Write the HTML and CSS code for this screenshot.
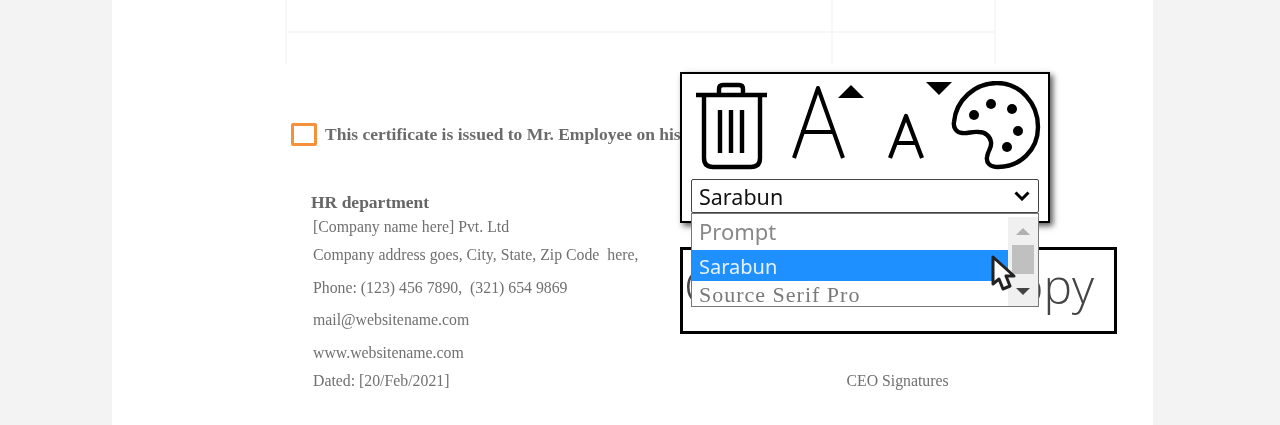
FILE: index.html
```html
<!DOCTYPE html>
<html lang="en">
<head>
<meta charset="utf-8">
<title>Certificate editor</title>
<link rel="stylesheet" href="styles.css">
</head>
<body>
<main class="page">
  <div class="grid-table">
    <div class="cell"></div><div class="cell"></div>
    <div class="cell"></div><div class="cell"></div>
  </div>
  <div class="notice">
    <span class="check"></span>
    <p class="notice-text">This certificate is issued to Mr. Employee on his</p>
  </div>
  <section class="details">
    <h2 class="dept">HR department</h2>
    <p class="line l-company">[Company name here] Pvt. Ltd</p>
    <p class="line l-address">Company address goes, City, State, Zip Code&nbsp; here,</p>
    <p class="line l-phone">Phone: (123) 456 7890,&nbsp; (321) 654 9869</p>
    <p class="line l-mail">mail@websitename.com</p>
    <p class="line l-web">www.websitename.com</p>
    <div class="foot">
      <p class="line">Dated: [20/Feb/2021]</p>
      <p class="line sign">CEO Signatures</p>
    </div>
  </section>

  <div class="copybox"><span>Certified</span><span>Copy</span></div>

  <div class="toolbox">
    <div class="tools">
      <svg class="icon i-trash" viewBox="694 82 76 88" width="76" height="88" fill="none" stroke="#000" stroke-width="4.4" stroke-linejoin="round">
        <path d="M696 95H767"/>
        <path d="M719 95V89Q719 85 723 85H739Q743 85 743 89V95"/>
        <path d="M704 95V158Q704 167 713 167H751Q760 167 760 158V95"/>
        <path d="M720 110V153M731 110V153M742 110V153"/>
      </svg>
      <svg class="icon i-big" viewBox="790 82 76 88" width="76" height="88">
        <path d="M794 158L818 88L843 158M801 132H835" fill="none" stroke="#000" stroke-width="4" stroke-linejoin="round"/>
        <path d="M838 98H864L851 85Z" fill="#000"/>
      </svg>
      <svg class="icon i-small" viewBox="886 78 68 88" width="68" height="88">
        <path d="M890 158L906 116L922 158M895 143H917" fill="none" stroke="#000" stroke-width="4.2" stroke-linejoin="round"/>
        <path d="M926 82H952L939 95Z" fill="#000"/>
      </svg>
      <svg class="icon i-palette" viewBox="951 81 90 90" width="90" height="90">
        <path d="M997 83C1020 83 1038 103 1038 127C1038 150 1020 167 998 167C990 167 986 163 987 157C988 150 992 148 991 142C990 136 985 132 979 132C972 131 968 134 962 133C957 133 953 128 954 122C956 100 975 83 997 83Z" fill="none" stroke="#000" stroke-width="4.4"/>
        <circle cx="991" cy="104" r="5"/><circle cx="1012" cy="109" r="5"/><circle cx="1018" cy="131" r="5"/><circle cx="1007" cy="147" r="5"/><circle cx="974" cy="115" r="5"/>
      </svg>
    </div>
    <div class="select">
      <span>Sarabun</span>
      <svg class="chev" viewBox="0 0 16 10" width="16" height="10"><path d="M1.5 1.5L8 8L14.5 1.5" fill="none" stroke="#000" stroke-width="3"/></svg>
    </div>
  </div>

  <div class="dropdown">
    <ul class="options">
      <li class="opt opt-prompt">Prompt</li>
      <li class="opt opt-active">Sarabun</li>
      <li class="opt opt-serif">Source Serif Pro</li>
    </ul>
    <div class="scrollbar">
      <span class="arrow-up"></span>
      <span class="thumb"></span>
      <span class="arrow-down"></span>
    </div>
    <svg class="cursor" viewBox="0 0 26 38" width="26" height="38"><path d="M2 2V29L8 24L12 34L19 31L15 21H23Z" fill="#fff" stroke="#222" stroke-width="3" stroke-linejoin="round"/></svg>
  </div>
</main>
</body>
</html>
```

FILE: styles.css
```css
* { box-sizing: border-box; }
html, body { margin: 0; height: 425px; overflow: hidden; background: #f3f3f3; }
p, h2, ul { margin: 0; padding: 0; }

.page {
  position: relative;
  width: 1041px;
  height: 425px;
  margin-left: 112px;
  padding-left: 173px;
  background: #fff;
  font-family: "Liberation Serif", "Times New Roman", serif;
  color: #666;
  filter: blur(0.6px);
}

.grid-table {
  display: grid;
  grid-template-columns: 546px 165px;
  grid-template-rows: 33px 31px;
  width: 711px;
  height: 64px;
}
.cell { border-left: 2px solid #f8f6fb; border-bottom: 2px solid #f8f6fb; }
.cell:nth-child(2n) { border-right: 2px solid #f8f6fb; }
.cell:nth-child(n+3) { border-bottom: 0; }

.notice { display: flex; align-items: center; gap: 8px; margin: 59px 0 0 6px; height: 23px; }
.check { width: 26px; height: 23px; border: 3px solid #f5913a; border-radius: 2px; flex: none; }
.notice-text { font-size: 17.5px; font-weight: bold; white-space: nowrap; color: #6b6b6b; }

.details { margin: 47px 0 0 26px; }
.dept { font-size: 17.5px; line-height: 18px; font-weight: bold; color: #666; }
.line { font-size: 15.8px; line-height: 18px; margin-left: 2px; white-space: nowrap; color: #707070; }
.l-company { margin-top: 7px; }
.l-address { margin-top: 10px; }
.l-phone { margin-top: 15px; }
.l-mail { margin-top: 14px; }
.l-web { margin-top: 15px; }
.foot { display: flex; margin-top: 10px; }
.sign { margin-left: 397px; }

.toolbox {
  position: absolute;
  left: 568px;
  top: 72px;
  width: 370px;
  height: 151px;
  padding: 8px 9px 0;
  border: 2px solid #000;
  background: #fff;
  box-shadow: 3px 3px 6px rgba(0, 0, 0, .65);
}
.tools { display: flex; height: 88px; padding-left: 3px; align-items: flex-start; }
.icon { display: block; flex: none; }
.i-big { margin-left: 20px; }
.i-small { margin-left: 20px; margin-top: -4px; }
.i-palette { margin-left: -3px; margin-top: -1px; }

.select {
  display: flex;
  align-items: center;
  justify-content: space-between;
  height: 34px;
  margin-top: 9px;
  padding: 0 8px 0 7px;
  border: 1.5px solid #444;
  border-radius: 2px;
  font: 21.5px "Noto Sans", sans-serif;
  color: #111;
}

.dropdown {
  position: absolute;
  left: 579px;
  top: 213px;
  width: 348px;
  height: 94px;
  display: flex;
  border: 1.5px solid #777;
  background: #fff;
}
.options { flex: 1; list-style: none; overflow: hidden; }
.opt { padding-left: 7px; white-space: nowrap; color: #888; font: 22px/30px "Noto Sans", sans-serif; }
.opt-prompt { height: 36px; padding-top: 2px; }
.opt-active { height: 31px; background: #1e90ff; color: #e8f2ff; font-size: 20px; line-height: 34px; }
.opt-serif { font-family: "Liberation Serif", serif; font-size: 22px; line-height: 28px; letter-spacing: 1px; color: #7a7a7a; }

.scrollbar {
  position: relative;
  flex: none;
  width: 30px;
  margin: 3px 0 0;
  background: #f0f0f0;
}
.thumb { position: absolute; left: 4px; top: 28px; width: 22px; height: 29px; background: #c0c0c0; }
.arrow-up, .arrow-down { position: absolute; left: 8px; width: 0; height: 0; border: 7px solid transparent; border-top: 0; border-bottom: 7px solid #b0b0b0; }
.arrow-up { top: 11px; }
.arrow-down { top: 71px; border: 7px solid transparent; border-bottom: 0; border-top: 7px solid #444; }

.cursor { position: absolute; left: 299px; top: 41px; }

.copybox {
  position: absolute;
  left: 568px;
  top: 247px;
  width: 437px;
  height: 87px;
  padding: 0 20px 0 1px;
  display: flex;
  justify-content: space-between;
  border: 3px solid #000;
  background: #fff;
  font: 300 48px/72px "Open Sans", sans-serif;
  color: #444;
  white-space: nowrap;
}
```
